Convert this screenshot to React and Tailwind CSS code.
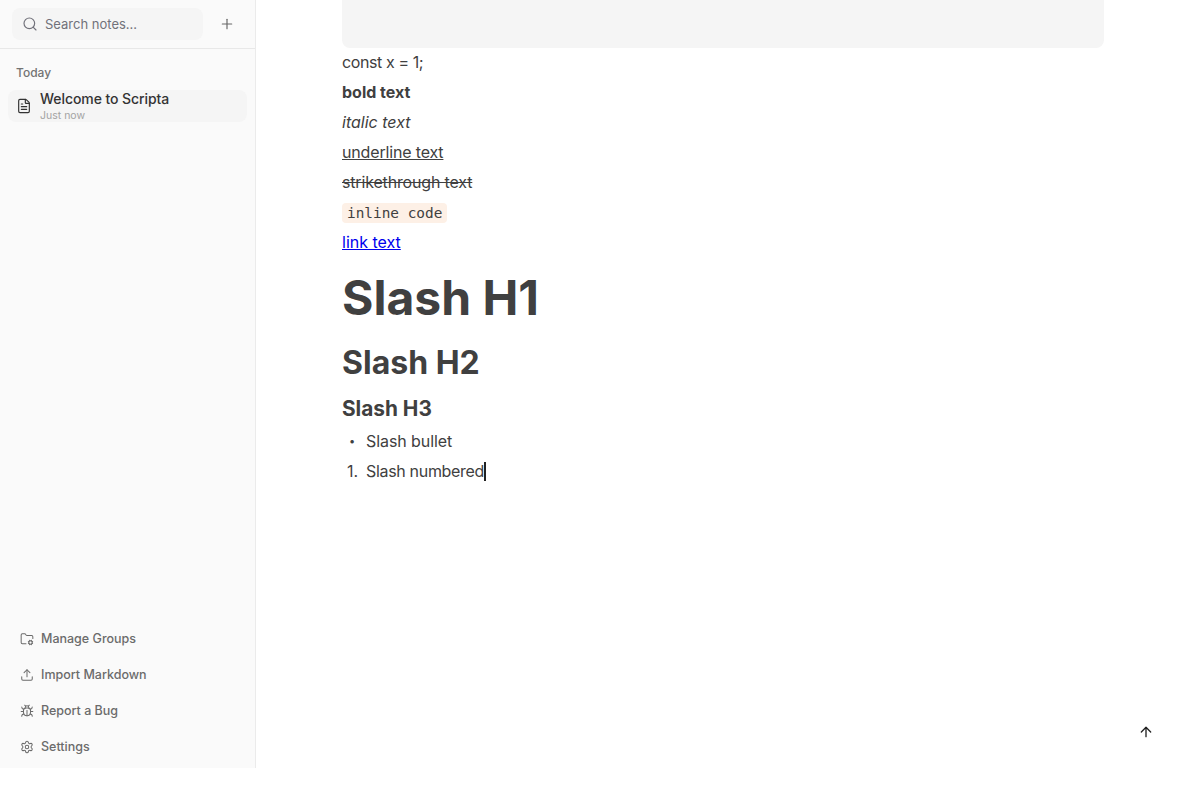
import React from "react";
import { Search, Plus, FileText, FolderCog, Upload, Bug, Settings, ArrowUp } from "lucide-react";

const foot = [
  [FolderCog, "Manage Groups"],
  [Upload, "Import Markdown"],
  [Bug, "Report a Bug"],
  [Settings, "Settings"],
];

export default function App() {
  return (
    <div className="flex h-[768px] overflow-hidden bg-white text-[#404040] font-['Inter',sans-serif]">
      <aside className="flex w-[256px] shrink-0 flex-col border-r border-[#ebebeb] bg-[#fafafa]">
        <div className="flex h-[49px] items-center border-b border-[#e8e8e8] pl-3 pr-5">
          <div className="flex h-8 w-[191px] items-center gap-[7px] rounded-lg bg-[#f5f5f5] pl-[10px] text-[13px] text-[#71717a]">
            <Search size={16} strokeWidth={1.75} />
            <span className="pt-[1px]">Search notes...</span>
          </div>
          <Plus size={16} strokeWidth={1.75} className="ml-4 text-[#666]" />
        </div>
        <div className="px-2 pt-[17px]">
          <div className="px-2 text-xs leading-[14px] font-medium text-[#737373]">Today</div>
          <div className="mt-[10px] flex h-8 items-center rounded-lg bg-[#f5f5f5] pl-2">
            <FileText size={16} strokeWidth={1.75} className="text-[#333]" />
            <div className="ml-2">
              <div className="text-sm leading-4 font-medium tracking-[-0.005em] text-[#333]">Welcome to Scripta</div>
              <div className="mt-[3px] text-[10.5px] leading-3 text-[#a3a3a3]">Just now</div>
            </div>
          </div>
        </div>
        <div className="mt-auto flex flex-col px-5 pb-[3px]">
          {foot.map(([Icon, label]) => (
            <div key={label} className="flex h-9 items-center gap-[7px] text-[12.5px] font-medium text-[#6b6b6b]">
              <Icon size={14} strokeWidth={1.75} />
              <span>{label}</span>
            </div>
          ))}
        </div>
      </aside>
      <main className="relative min-w-0 flex-1">
        <div className="ml-[86px] w-[762px] text-base leading-6">
          <div className="h-12 rounded-b-lg bg-[#f5f5f5]"></div>
          <p className="h-[29px] pt-[2px] tracking-[-0.025em]">const x = 1;</p>
          <p className="h-[30px] py-[3px] font-bold">bold text</p>
          <p className="h-[30px] py-[3px] italic">italic text</p>
          <p className="h-[30px] py-[3px] underline tracking-[-0.01em]">underline text</p>
          <p className="h-[30px] py-[3px] line-through tracking-[-0.01em]">strikethrough text</p>
          <p className="h-[30px] pt-[3px]">
            <code className="rounded bg-[#fdf0e6] px-[5px] py-[2px] font-['DejaVu_Sans_Mono',monospace] text-[14.4px]">inline code</code>
          </p>
          <p className="h-[29px] pt-[3px]"><a href="#" className="text-[#0000ee] underline">link text</a></p>
          <h1 className="mt-[13px] text-[48px] leading-[58px] font-bold">Slash H1</h1>
          <h2 className="mt-[16px] text-[32px] leading-[39px] font-bold">Slash H2</h2>
          <h3 className="mt-[13px] text-[20.8px] leading-[27px] font-bold">Slash H3</h3>
          <ul className="mt-[4px]">
            <li className="flex h-[30px] items-center">
              <span className="w-6 pl-[7px] text-[11px]">•</span>
              <span className="tracking-[-0.005em]">Slash bullet</span>
            </li>
          </ul>
          <ol>
            <li className="flex h-[30px] items-center">
              <span className="w-6 pl-[5px]">1.</span>
              <span className="tracking-[-0.02em]">Slash numbered</span>
              <span className="h-[19px] w-[2px] bg-[#222]"></span>
            </li>
          </ol>
        </div>
        <button className="absolute left-[882px] top-[724px] text-[#222]">
          <ArrowUp size={16} strokeWidth={2} />
        </button>
      </main>
    </div>
  );
}
